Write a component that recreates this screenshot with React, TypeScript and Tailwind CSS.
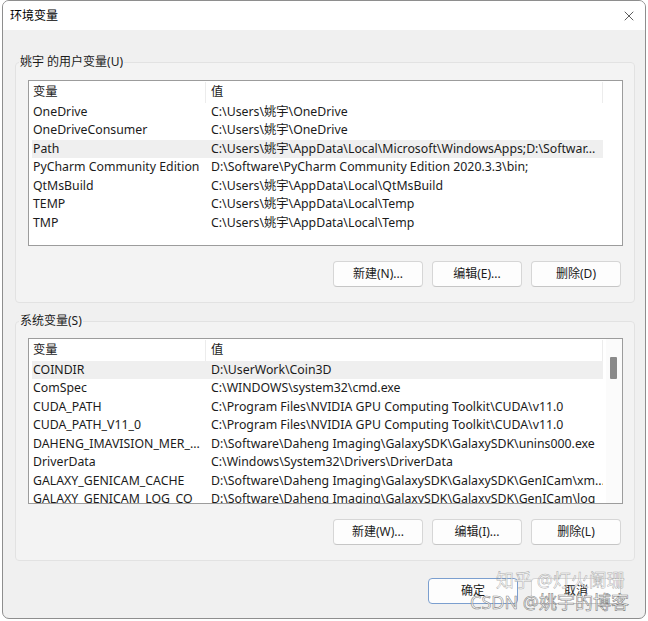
import { X } from "lucide-react";

type EnvVar = { name: string; value: string };

const userVars: EnvVar[] = [
  { name: "OneDrive", value: "C:\\Users\\姚宇\\OneDrive" },
  { name: "OneDriveConsumer", value: "C:\\Users\\姚宇\\OneDrive" },
  { name: "Path", value: "C:\\Users\\姚宇\\AppData\\Local\\Microsoft\\WindowsApps;D:\\Softwar..." },
  { name: "PyCharm Community Edition", value: "D:\\Software\\PyCharm Community Edition 2020.3.3\\bin;" },
  { name: "QtMsBuild", value: "C:\\Users\\姚宇\\AppData\\Local\\QtMsBuild" },
  { name: "TEMP", value: "C:\\Users\\姚宇\\AppData\\Local\\Temp" },
  { name: "TMP", value: "C:\\Users\\姚宇\\AppData\\Local\\Temp" },
];

const systemVars: EnvVar[] = [
  { name: "COINDIR", value: "D:\\UserWork\\Coin3D" },
  { name: "ComSpec", value: "C:\\WINDOWS\\system32\\cmd.exe" },
  { name: "CUDA_PATH", value: "C:\\Program Files\\NVIDIA GPU Computing Toolkit\\CUDA\\v11.0" },
  { name: "CUDA_PATH_V11_0", value: "C:\\Program Files\\NVIDIA GPU Computing Toolkit\\CUDA\\v11.0" },
  { name: "DAHENG_IMAVISION_MER_...", value: "D:\\Software\\Daheng Imaging\\GalaxySDK\\GalaxySDK\\unins000.exe" },
  { name: "DriverData", value: "C:\\Windows\\System32\\Drivers\\DriverData" },
  { name: "GALAXY_GENICAM_CACHE", value: "D:\\Software\\Daheng Imaging\\GalaxySDK\\GalaxySDK\\GenICam\\xm..." },
  { name: "GALAXY_GENICAM_LOG_CO", value: "D:\\Software\\Daheng Imaging\\GalaxySDK\\GalaxySDK\\GenICam\\log" },
];

function VarList({ vars, selected, scrollbar }: { vars: EnvVar[]; selected: number; scrollbar?: boolean }) {
  return (
    <div className="flex h-[166px] overflow-hidden border border-[#9c9c9c] bg-white">
      <div className="w-[577px] shrink-0 px-[3px] pt-[1px]">
        {/* Header */}
        <div className="flex h-[20.5px] items-center">
          <div className="w-[174px] h-full flex items-center border-r border-[#ececec] pl-[1px]">变量</div>
          <div className="flex-1 h-full flex items-center border-r border-[#ececec] pl-[5px]">值</div>
        </div>
        {vars.map((v, i) => (
          <div
            key={v.name}
            className={`flex h-[18.5px] items-center whitespace-nowrap ${i === selected ? "bg-[#efefef]" : ""}`}
          >
            <div className="w-[174px] overflow-hidden pl-[1px]">{v.name}</div>
            <div className="flex-1 overflow-hidden pl-[5px]">{v.value}</div>
          </div>
        ))}
      </div>
      {scrollbar && (
        <div className="flex-1 bg-[#fbfbfb] pl-[4px] pt-[18px]">
          <div className="h-[22px] w-[7px] rounded-[1px] bg-[#8a8a8a]" />
        </div>
      )}
    </div>
  );
}

function Btn({ label, primary }: { label: string; primary?: boolean }) {
  return (
    <button
      className={`flex h-[26px] w-[90px] items-center justify-center rounded-[4px] border bg-[#fdfdfd] text-[12px] text-[#1b1b1b] ${
        primary ? "border-[#7b9fcf]" : "border-[#d6d6d6] border-b-[#c6c6c6]"
      }`}
    >
      {label}
    </button>
  );
}

function Group({
  title,
  vars,
  selected,
  scrollbar,
  buttons,
  className,
  topPad,
}: {
  title: string;
  vars: EnvVar[];
  selected: number;
  scrollbar?: boolean;
  buttons: string[];
  className: string;
  topPad: string;
}) {
  return (
    <fieldset className={`w-[620px] rounded-[4px] border border-[#e2e2e2] bg-[#f3f3f3] p-0 ${className}`}>
      <legend className="ml-[3px] px-[1px] text-[12px] leading-[14px]">{title}</legend>
      <div className={`pl-[12px] pr-[11px] pb-[15px] ${topPad}`}>
        <VarList vars={vars} selected={selected} scrollbar={scrollbar} />
        <div className="mt-[15px] mr-[2px] flex justify-end gap-[9px]">
          {buttons.map((b) => (
            <Btn key={b} label={b} />
          ))}
        </div>
      </div>
    </fieldset>
  );
}

export default function App() {
  return (
    <div className="relative h-[621px] w-[648px] overflow-hidden bg-white font-['Noto_Sans','Noto_Sans_CJK_SC',sans-serif] text-[12.3px] text-[#1b1b1b]">
      <div className="ml-[2px] flex h-[619px] w-[644px] flex-col overflow-hidden rounded-[7px] border border-[#8e8e8e] bg-[#f0f0f0]">
        {/* Title bar */}
        <div className="flex h-[29px] shrink-0 items-center justify-between bg-white pl-[7px] pr-[8px]">
          <span className="text-[12px] text-black">环境变量</span>
          <X className="h-[16px] w-[16px] text-[#333]" strokeWidth={1.2} />
        </div>

        <div className="pl-[12px]">
          <Group
            title="姚宇 的用户变量(U)"
            vars={userVars}
            selected={2}
            buttons={["新建(N)...", "编辑(E)...", "删除(D)"]}
            className="mt-[25px]"
            topPad="pt-[11px]"
          />
          <Group
            title="系统变量(S)"
            vars={systemVars}
            selected={0}
            scrollbar
            buttons={["新建(W)...", "编辑(I)...", "删除(L)"]}
            className="mt-[11px]"
            topPad="pt-[10px]"
          />
          <div className="mt-[17px] mr-[24px] flex justify-end gap-[13px]">
            <Btn label="确定" primary />
            <Btn label="取消" />
          </div>
        </div>
      </div>

      {/* watermarks */}
      <div className="pointer-events-none absolute left-[496px] top-[569px] text-[18px] leading-[22px] text-white/60 [-webkit-text-stroke:0.5px_rgba(120,120,120,0.6)]">
        知乎 @灯火阑珊
      </div>
      <div className="pointer-events-none absolute left-[470px] top-[591px] text-[18px] leading-[22px] text-white/70 [-webkit-text-stroke:0.6px_rgba(90,90,90,0.75)]">
        CSDN @姚宇的博客
      </div>
    </div>
  );
}
